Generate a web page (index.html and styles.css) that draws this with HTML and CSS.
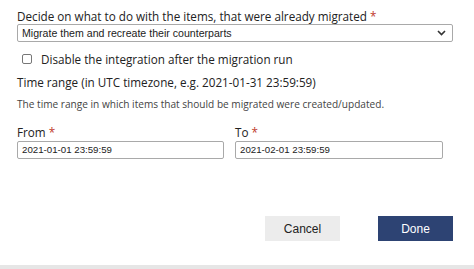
FILE: index.html
```html
<!DOCTYPE html>
<html>
<head>
<meta charset="utf-8">
<link rel="stylesheet" href="styles.css">
</head>
<body>
<div class="page">
  <form class="form">
    <div class="field">
      <label class="label">Decide on what to do with the items, that were already migrated <span class="req">*</span></label>
      <div class="select">
        <span class="select-text">Migrate them and recreate their counterparts</span>
        <svg class="chev" width="9" height="6" viewBox="0 0 9 6"><path d="M1 1 L4.5 4.5 L8 1" fill="none" stroke="#333" stroke-width="1.6"/></svg>
      </div>
    </div>
    <div class="check-row">
      <span class="checkbox"></span>
      <span class="check-label">Disable the integration after the migration run</span>
    </div>
    <div class="section-title">Time range (in UTC timezone, e.g. 2021-01-31 23:59:59)</div>
    <div class="hint">The time range in which items that should be migrated were created/updated.</div>
    <div class="range">
      <div class="col from">
        <label class="label">From <span class="req">*</span></label>
        <div class="input">2021-01-01 23:59:59</div>
      </div>
      <div class="col to">
        <label class="label">To <span class="req">*</span></label>
        <div class="input">2021-02-01 23:59:59</div>
      </div>
    </div>
  </form>
  <div class="actions">
    <button type="button" class="btn cancel">Cancel</button>
    <button type="button" class="btn done">Done</button>
  </div>
</div>
<div class="footer-bar"></div>
</body>
</html>
```
FILE: styles.css
```css
html, body {
  margin: 0;
  padding: 0;
  background: #ffffff;
}
body {
  width: 474px;
  height: 269px;
  overflow: hidden;
  position: relative;
  font-family: "Open Sans", "Liberation Sans", sans-serif;
  color: #222;
}
.page {
  padding: 8px 21px 0 17px;
  height: 261px;
  box-sizing: border-box;
  display: flex;
  flex-direction: column;
}
.form {
  display: flex;
  flex-direction: column;
}
.label {
  display: block;
  font-size: 11.7px;
  line-height: 16px;
  color: #222;
}
.req {
  color: #c0392b;
}
.select {
  height: 18px;
  box-sizing: border-box;
  border: 1px solid #a9a9a9;
  border-radius: 2px;
  display: flex;
  align-items: center;
  justify-content: space-between;
  padding: 0 6px 0 4px;
}
.select-text {
  font-family: "Liberation Sans", Arial, sans-serif;
  font-size: 10.6px;
  color: #222;
}
.chev {
  display: block;
}
.check-row {
  display: flex;
  align-items: center;
  margin-top: 9px;
  height: 16px;
}
.checkbox {
  width: 8px;
  height: 8px;
  border: 1px solid #777;
  border-radius: 2px;
  margin-left: 5px;
  margin-right: 9px;
}
.check-label {
  font-size: 11.7px;
  line-height: 16px;
}
.section-title {
  margin-top: 7px;
  font-size: 11.7px;
  line-height: 16px;
}
.hint {
  margin-top: 7px;
  font-size: 10.1px;
  line-height: 14px;
  color: #444;
}
.range {
  display: flex;
  gap: 11px;
  margin-top: 13px;
}
.col.from {
  width: 207px;
}
.col.to {
  width: 208px;
}
.col .label {
  margin-bottom: 1px;
}
.input {
  height: 18px;
  box-sizing: border-box;
  border: 1px solid #a9a9a9;
  border-radius: 2px;
  padding: 0 4px;
  font-family: "Liberation Sans", Arial, sans-serif;
  font-size: 9.7px;
  line-height: 16px;
  color: #222;
}
.actions {
  margin-top: auto;
  display: flex;
  justify-content: flex-end;
  gap: 38px;
  padding-bottom: 20px;
}
.btn {
  height: 25px;
  width: 75px;
  border: none;
  border-radius: 0;
  font-family: "Liberation Sans", Arial, sans-serif;
  font-size: 12px;
  padding: 0;
}
.cancel {
  background: #ececec;
  color: #222;
}
.done {
  background: #2d4373;
  color: #ffffff;
}
.footer-bar {
  position: absolute;
  left: 0;
  right: 0;
  bottom: 0;
  height: 4px;
  background: #e6e6e6;
}
```
